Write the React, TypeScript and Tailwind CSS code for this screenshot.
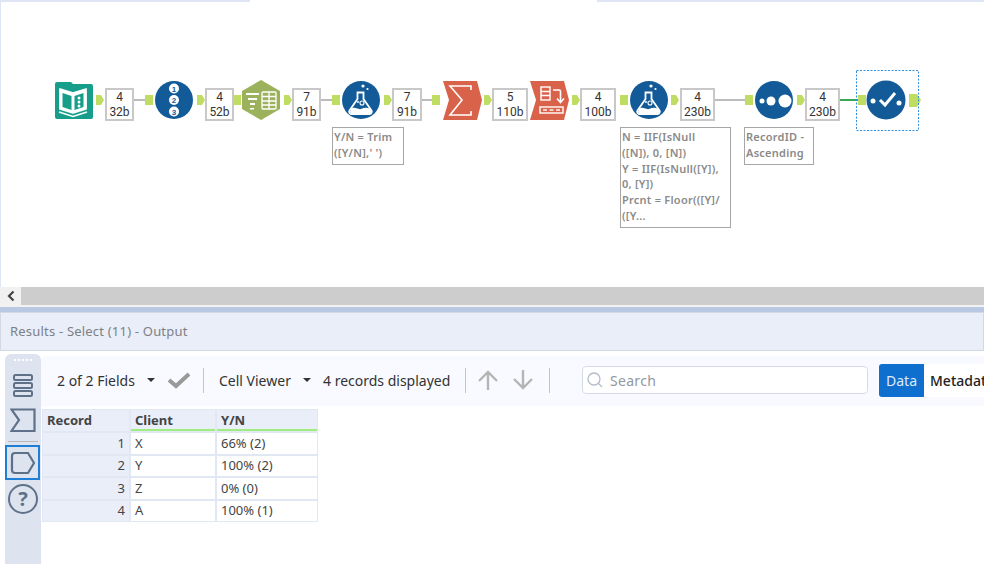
import React from "react";

const GREEN = "#bfdc63";

function OutAnchor({ x }: { x: number }) {
  return <polygon points={`${x},95 ${x + 5},95 ${x + 8},100 ${x + 5},105 ${x},105`} fill={GREEN} />;
}
function InAnchor({ x }: { x: number }) {
  return <rect x={x} y={95} width={8} height={10} fill={GREEN} />;
}

function Flask({ cx }: { cx: number }) {
  const t = `translate(${cx - 19} 81)`;
  return (
    <g transform={t}>
      <circle cx={19} cy={19} r={19} fill="#125b98" />
      <path d="M15.5 11.5h6v6.5l8 11.5a2.3 2.3 0 0 1-2 3.5H9.5a2.3 2.3 0 0 1-2-3.5l8-11.5z" fill="none" stroke="#fff" strokeWidth={1.8} />
      <path d="M9 28c4-3 7 1 10 0s6-2 9 0l1.4 2.5a1.5 1.5 0 0 1-1.4 1.8H9.5a1.5 1.5 0 0 1-1.4-1.8z" fill="#fff" />
      <circle cx={20} cy={22} r={2} fill="none" stroke="#fff" strokeWidth={1.1} />
      <circle cx={16} cy={21} r={1} fill="#fff" />
      <circle cx={21} cy={5} r={1.6} fill="#fff" />
      <circle cx={25.5} cy={8} r={1.1} fill="#fff" />
    </g>
  );
}

function Diagram() {
  return (
    <svg className="absolute -left-px top-0" width={984} height={287} viewBox="0 0 984 287">
      {/* wires */}
      <g stroke="#a6a6a6" strokeWidth={1.5} fill="none">
        <path d="M133 100H147" />
        <path d="M233 100H238" />
        <path d="M320 100H334" />
        <path d="M421 100H434" />
        <path d="M714 100H747" />
      </g>
      <path d="M839 100H860" stroke="#3aa655" strokeWidth={2} fill="none" />

      {/* Book */}
      <path d="M57 82h14l2 2h18a2 2 0 0 1 2 2v31a2 2 0 0 1-2 2H57a2 2 0 0 1-2-2V84a2 2 0 0 1 2-2z" fill="#169e8b" />
      <path d="M60 89l13 4 13-4v20l-13 4-13-4z" fill="#fff" stroke="#fff" strokeWidth={1.8} strokeLinejoin="round" />
      <path d="M62.5 93l9 3v14l-9-3z" fill="#169e8b" />
      <path d="M74.5 96l9-3v14l-9 3z" fill="#169e8b" />
      <path d="M59 112l14 4.5 14-4.5" fill="none" stroke="#fff" strokeWidth={1.5} />
      <circle cx={79} cy={98} r={1.5} fill="#fff" />
      <circle cx={79} cy={102} r={1.5} fill="#fff" />
      <circle cx={79} cy={106} r={1.5} fill="#fff" />
      <OutAnchor x={96} />

      {/* 123 */}
      <InAnchor x={145} />
      <circle cx={174} cy={100} r={19} fill="#125b98" />
      <g fill="#fff">
        <circle cx={174} cy={88.5} r={5} />
        <circle cx={174} cy={100} r={5} />
        <circle cx={174} cy={111.5} r={5} />
      </g>
      <g fill="#125b98" fontFamily="Liberation Sans, sans-serif" fontSize={8} fontWeight={700} textAnchor="middle">
        <text x={174} y={91.5}>1</text>
        <text x={174} y={103}>2</text>
        <text x={174} y={114.5}>3</text>
      </g>
      <OutAnchor x={197} />

      {/* Hexagon */}
      <InAnchor x={233} />
      <polygon points="261,80 280,91 280,109 261,120 242,109 242,91" fill="#9bb15b" />
      <g fill="#fff">
        <rect x={246} y={93} width={13} height={2} />
        <rect x={248} y={98} width={9} height={2} />
        <rect x={250} y={103} width={5} height={2} />
        <rect x={250} y={108} width={4} height={1.5} />
      </g>
      <g fill="none" stroke="#fff" strokeWidth={1.3}>
        <rect x={262} y={92} width={14} height={17} rx={1} />
        <path d="M262 96.5h14M262 101h14M262 105h14M269 92v17" />
      </g>
      <OutAnchor x={284} />

      {/* Flask 1 */}
      <InAnchor x={332} />
      <Flask cx={361} />
      <OutAnchor x={384} />

      {/* Sigma */}
      <InAnchor x={432} />
      <polygon points="443,81 477,81 482,100 477,120 443,120 449,100" fill="#d9634a" />
      <path d="M471 90v-4h-21l12 14-12 15h21v-4" fill="none" stroke="#fff" strokeWidth={1.6} />
      <OutAnchor x={484} />

      {/* Crosstab */}
      <polygon points="530,81 564,81 569,100 564,120 530,120 536,100" fill="#d9634a" />
      <g fill="none" stroke="#fff" strokeWidth={1.4}>
        <rect x={541} y={87} width={9} height={13} />
        <path d="M541 91.5h9M541 95.5h9" />
        <path d="M553 90h6a1.5 1.5 0 0 1 1.5 1.5V101" strokeWidth={1.6} />
        <path d="M557 98.5l3.5 4 3.5-4" strokeWidth={1.6} />
        <rect x={540} y={107} width={23} height={6} />
      </g>
      <g fill="#fff">
        <rect x={543} y={109.3} width={4} height={1.4} />
        <rect x={549.5} y={109.3} width={4} height={1.4} />
        <rect x={556} y={109.3} width={4} height={1.4} />
      </g>
      <OutAnchor x={572} />

      {/* Flask 2 */}
      <InAnchor x={620} />
      <Flask cx={649} />
      <OutAnchor x={671} />

      {/* Sort */}
      <InAnchor x={745} />
      <circle cx={774} cy={100} r={19} fill="#125b98" />
      <g fill="#fff">
        <circle cx={762} cy={101} r={2.5} />
        <circle cx={771} cy={101} r={4.5} />
        <circle cx={785} cy={101} r={6.5} />
      </g>
      <OutAnchor x={797} />

      {/* Select */}
      <InAnchor x={858} />
      <circle cx={886} cy={100} r={19.5} fill="#125b98" />
      <g fill="#fff">
        <circle cx={873} cy={101} r={2.5} />
        <circle cx={899} cy={103} r={2.5} />
      </g>
      <path d="M880 100l5 5 10-12" fill="none" stroke="#fff" strokeWidth={3} />
      <polygon points="909,94 917,94 921,100 917,107 909,107" fill={GREEN} />
      <rect x={856.5} y={70.5} width={62} height={60} fill="none" stroke="#2f8fe0" strokeWidth={1} strokeDasharray="2 1.5" />
    </svg>
  );
}

const badges = [
  { left: 104, w: 29, a: "4", b: "32b" },
  { left: 204, w: 29, a: "4", b: "52b" },
  { left: 291, w: 29, a: "7", b: "91b" },
  { left: 391, w: 30, a: "7", b: "91b" },
  { left: 491, w: 36, a: "5", b: "110b" },
  { left: 579, w: 36, a: "4", b: "100b" },
  { left: 679, w: 35, a: "4", b: "230b" },
  { left: 804, w: 35, a: "4", b: "230b" },
];

function Badges() {
  return (
    <>
      {badges.map((b, i) => (
        <div
          key={i}
          className="absolute top-[88px] flex h-[33px] flex-col items-center border-2 border-[#c8c8c8] bg-white font-['Roboto',sans-serif] text-[12px] leading-[14.5px] text-[#333]"
          style={{ left: b.left, width: b.w }}
        >
          <span>{b.a}</span>
          <span>{b.b}</span>
        </div>
      ))}
    </>
  );
}

function Note({ cls, children }: { cls: string; children: React.ReactNode }) {
  return (
    <div className={`absolute top-[127px] border border-[#a6a6a6] bg-white pl-px pt-px text-[11px] font-semibold leading-[15.8px] tracking-[0.25px] text-[#8a8a8a] ${cls}`}>
      {children}
    </div>
  );
}

function Sidebar() {
  return (
    <div className="flex w-[36px] shrink-0 flex-col items-center rounded-t-md bg-[#dde4ef]">
      <div className="mt-[5px] flex h-[2px] gap-[2px]">
        {[0, 1, 2, 3, 4].map((i) => (
          <span key={i} className="h-[2px] w-[2px] bg-white" />
        ))}
      </div>
      <svg className="mt-[12px]" width={24} height={26} viewBox="0 0 24 26" fill="none" stroke="#5f7189" strokeWidth={2}>
        <rect x={3} y={2} width={18} height={5} rx={1.5} />
        <rect x={3} y={10} width={18} height={5} rx={1.5} />
        <rect x={3} y={18} width={18} height={5} rx={1.5} />
      </svg>
      <svg className="mt-[8px]" width={26} height={26} viewBox="0 0 26 26" fill="none" stroke="#5f7189" strokeWidth={2.2}>
        <path d="M1.5 2.5H24.5V24H1.5L9 13z" />
      </svg>
      <div className="mt-[8px] h-px w-[30px] bg-[#b9b9b9]" />
      <div className="mr-px mt-[3px] flex h-[35px] w-[35px] items-center justify-center border-2 border-[#1e7fd4]">
        <svg width={26} height={24} viewBox="0 0 26 24" fill="none" stroke="#5f7189" strokeWidth={2.2}>
          <path d="M5 2H18L24 12L18 22H5A3 3 0 0 1 2 19V5A3 3 0 0 1 5 2z" />
        </svg>
      </div>
      <div className="mt-[4px] flex h-[30px] w-[30px] items-center justify-center rounded-full border-[2.5px] border-[#5f7189] text-[20px] font-bold leading-none text-[#5f7189]">
        ?
      </div>
    </div>
  );
}

function Caret({ cls }: { cls: string }) {
  return <span className={`h-0 w-0 shrink-0 border-x-[4px] border-t-[4px] border-x-transparent border-t-[#333] ${cls}`} />;
}

function Sep({ cls }: { cls: string }) {
  return <span className={`h-[25px] w-px shrink-0 bg-[#c4c4c4] ${cls}`} />;
}

function Toolbar() {
  return (
    <div className="mt-[2px] flex h-[50px] items-center overflow-hidden rounded-tl-md bg-[#f8faff] pb-[2px] pl-[16px] text-[14px] text-[#333]">
      <span className="w-[78px] shrink-0 whitespace-nowrap">2 of 2 Fields</span>
      <Caret cls="ml-[12px]" />
      <svg className="ml-[12px] shrink-0" width={24} height={18} viewBox="0 0 24 18" fill="none" stroke="#999" strokeWidth={4}>
        <path d="M2 9l7 6L22 3" />
      </svg>
      <Sep cls="ml-[12px]" />
      <span className="ml-[15px] w-[73px] shrink-0 whitespace-nowrap">Cell Viewer</span>
      <Caret cls="ml-[11px]" />
      <span className="ml-[12px] w-[127px] shrink-0 whitespace-nowrap">4 records displayed</span>
      <Sep cls="ml-[15px]" />
      <svg className="ml-[11px] shrink-0" width={22} height={22} viewBox="0 0 22 22" fill="none" stroke="#b5b5b5" strokeWidth={2.4}>
        <path d="M11 21V3M2 12l9-9 9 9" />
      </svg>
      <svg className="ml-[13px] shrink-0" width={22} height={22} viewBox="0 0 22 22" fill="none" stroke="#b5b5b5" strokeWidth={2.4}>
        <path d="M11 1v18M2 10l9 9 9-9" />
      </svg>
      <Sep cls="ml-[15px]" />
      <div className="ml-[32px] flex h-[28px] w-[286px] shrink-0 items-center rounded-[4px] border border-[#d5dbe6] bg-white pl-[3px]">
        <svg width={18} height={18} viewBox="0 0 18 18" fill="none" stroke="#b4bcc8" strokeWidth={1.3}>
          <circle cx={8} cy={8} r={6} />
          <path d="M12.5 12.5L16 16" />
        </svg>
        <span className="ml-[6px] tracking-[0.3px] text-[#9298a0]">Search</span>
      </div>
      <div className="ml-[11px] flex h-[33px] w-[45px] shrink-0 items-center justify-center rounded-l-[3px] bg-[#0e6fce] text-[#dfeaf7]">Data</div>
      <div className="flex h-[33px] w-[80px] shrink-0 items-center bg-white pl-[6px] font-medium text-[#222]">Metadata</div>
    </div>
  );
}

const rows = [
  ["1", "X", "66% (2)"],
  ["2", "Y", "100% (2)"],
  ["3", "Z", "0% (0)"],
  ["4", "A", "100% (1)"],
];

function DataTable() {
  return (
    <div className="ml-px mt-[3px] grid w-[276px] grid-cols-[86px_84px_100px] gap-[2px] bg-[#e1e7f3] p-px text-[13px] text-[#444]">
      <div className="flex h-[21px] items-center bg-[#e9eef8] pl-[4px] font-bold">Record</div>
      <div className="flex h-[21px] items-center border-b-[2px] border-[#9ded7f] bg-[#e9eef8] pl-[4px] pt-[2px] font-bold">Client</div>
      <div className="flex h-[21px] items-center border-b-[2px] border-[#9ded7f] bg-[#e9eef8] pl-[4px] pt-[2px] font-bold">Y/N</div>
      {rows.map((r) => (
        <React.Fragment key={r[0]}>
          <div className="flex h-[20.5px] items-center justify-end bg-[#e9eef8] pr-[4px]">{r[0]}</div>
          <div className="flex h-[20.5px] items-center bg-white pl-[4px]">{r[1]}</div>
          <div className="flex h-[20.5px] items-center bg-white pl-[4px]">{r[2]}</div>
        </React.Fragment>
      ))}
    </div>
  );
}

export default function App() {
  return (
    <div className="flex h-[564px] w-[984px] flex-col overflow-hidden bg-white font-['Noto_Sans',sans-serif]">
      {/* Canvas */}
      <div className="relative h-[287px] shrink-0 border-l border-[#dfe5f5]">
        <div className="absolute -left-px top-0 h-[2px] w-[250px] bg-[#dfe5f5]" />
        <div className="absolute left-[596px] top-0 h-[2px] w-[387px] bg-[#dfe5f5]" />
        <Diagram />
        <Badges />
        <Note cls="left-[331px] h-[38px] w-[72px]">Y/N = Trim<br />([Y/N],' ')</Note>
        <Note cls="left-[619px] h-[101px] w-[111px]">N = IIF(IsNull<br />([N]), 0, [N])<br />Y = IIF(IsNull([Y]),<br />0, [Y])<br />Prcnt = Floor(([Y]/<br />([Y...</Note>
        <Note cls="left-[743px] h-[38px] w-[70px]">RecordID -<br />Ascending</Note>
      </div>

      {/* Scrollbar */}
      <div className="flex h-[18px] shrink-0 bg-[#cdcdcd]">
        <div className="flex w-[21px] items-center justify-center bg-[#f1f1f1]">
          <svg width={12} height={12} viewBox="0 0 12 12" fill="none" stroke="#444" strokeWidth={2.2}>
            <path d="M8.5 1.5L4 6l4.5 4.5" />
          </svg>
        </div>
      </div>

      <div className="h-[2px] shrink-0 bg-[#f2f2f2]" />
      <div className="h-[5px] shrink-0 bg-[#b9c9e4]" />

      {/* Results header */}
      <div className="flex h-[39px] shrink-0 items-center border border-[#d3d9e4] bg-[#e9eef8] pl-[9px] text-[13px] tracking-[0.2px] text-[#7c8086]">
        Results - Select (11) - Output
      </div>

      {/* Results body */}
      <div className="flex min-h-0 flex-1 bg-white pl-[5px] pt-[3px]">
        <Sidebar />
        <div className="flex min-w-0 flex-1 flex-col">
          <Toolbar />
          <DataTable />
        </div>
      </div>
    </div>
  );
}
